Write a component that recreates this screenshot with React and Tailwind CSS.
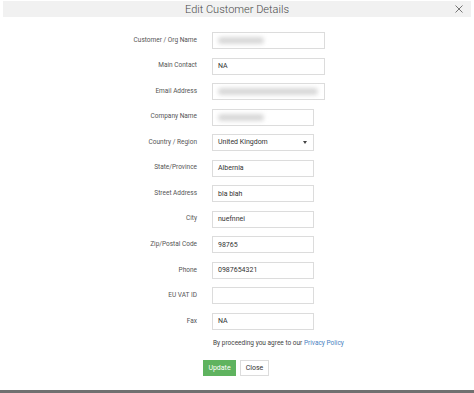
import React from "react";

const rows = [
  { label: "Customer / Org Name", w: "w-[113px]", blur: "w-[46px]" },
  { label: "Main Contact", w: "w-[113px]", value: "NA" },
  { label: "Email Address", w: "w-[113px]", blur: "w-[104px]" },
  { label: "Company Name", w: "w-[102px]", blur: "w-[46px]" },
  { label: "Country / Region", w: "w-[102px]", value: "United Kingdom", select: true },
  { label: "State/Province", w: "w-[102px]", value: "Albernia" },
  { label: "Street Address", w: "w-[102px]", value: "bla blah" },
  { label: "City", w: "w-[102px]", value: "nuefnnei" },
  { label: "Zip/Postal Code", w: "w-[102px]", value: "98765" },
  { label: "Phone", w: "w-[102px]", value: "0987654321" },
  { label: "EU VAT ID", w: "w-[102px]", value: "" },
  { label: "Fax", w: "w-[102px]", value: "NA" },
];

export default function App() {
  return (
    <div className="w-[474px] h-[393px] bg-white flex flex-col overflow-hidden font-['Roboto',sans-serif]">
      <div className="mt-[1px] mx-[3px] h-[16px] bg-[#f1f1f1] grid grid-cols-[1fr_auto_1fr] items-center">
        <div />
        <div className="text-[11px] leading-none text-[#4a4a4a] font-light">Edit Customer Details</div>
        <div className="flex justify-end pr-[8px]">
          <svg width="8" height="8" viewBox="0 0 8 8" className="text-[#666]">
            <path d="M0.5 0.5L7.5 7.5M7.5 0.5L0.5 7.5" stroke="currentColor" strokeWidth="0.9" />
          </svg>
        </div>
      </div>
      <div className="flex flex-col gap-[8.55px] mt-[15px]">
        {rows.map((r) => (
          <div key={r.label} className="grid grid-cols-[197px_1fr] gap-[15px] items-center">
            <div className="text-right text-[6.5px] text-[#555]">{r.label}</div>
            <div className={`${r.w} h-[17px] border border-[#dcdcdc] bg-white flex items-center pl-[5px] pr-[6px] text-[7px] text-[#333]`}>
              {r.blur ? (
                <div className={`${r.blur} h-[7px] bg-[#d8d8d8] blur-[2px] rounded-sm`} />
              ) : (
                <span className="flex-1">{r.value}</span>
              )}
              {r.select && (
                <svg width="4" height="3" viewBox="0 0 4 3">
                  <path d="M0 0H4L2 3Z" fill="#444" />
                </svg>
              )}
            </div>
          </div>
        ))}
      </div>
      <div className="mt-[9px] pl-[213px] text-[6.5px] text-[#444]">
        By proceeding you agree to our <span className="text-[#4a7fc1]">Privacy Policy</span>
      </div>
      <div className="mt-[11px] pl-[203px] flex gap-[4px]">
        <div className="w-[33px] h-[16px] bg-[#5fb35f] text-white text-[7px] flex items-center justify-center">Update</div>
        <div className="w-[29px] h-[16px] border border-[#dcdcdc] text-[#333] text-[7px] flex items-center justify-center">Close</div>
      </div>
      <div className="mt-auto h-[3px] bg-[#707070]" />
    </div>
  );
}
